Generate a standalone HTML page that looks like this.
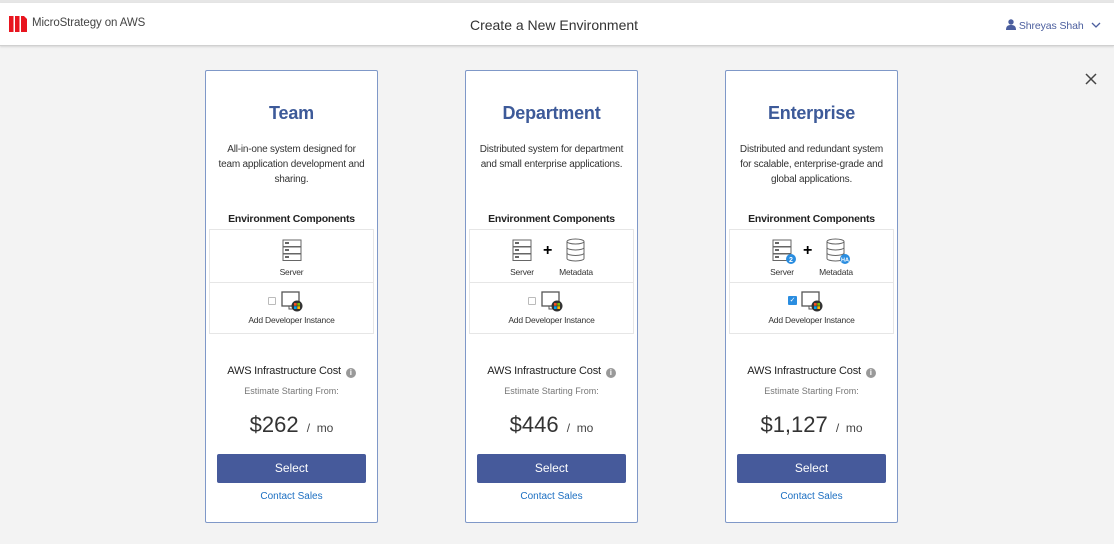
<!DOCTYPE html>
<html><head><meta charset="utf-8"><style>
*{box-sizing:border-box;margin:0;padding:0}
body{width:1114px;height:544px;background:#f3f3f3;font-family:"Liberation Sans",sans-serif;position:relative;overflow:hidden}
.top{position:absolute;left:0;top:0;width:1114px;height:3px;background:#e6e6e6}
.hdr{position:absolute;left:0;top:3px;width:1114px;height:43px;background:#fff;border-bottom:1px solid #d0d0d0;box-shadow:0 1px 2px rgba(0,0,0,.12)}
.logo{position:absolute;left:9px;top:13px}
.brand{position:absolute;left:32px;top:14px;font-size:11.5px;color:#444;letter-spacing:-0.1px}
.title{position:absolute;left:0;width:1108px;text-align:center;top:14px;font-size:14px;color:#333}
.user{position:absolute;left:1006px;top:16px;font-size:10.5px;color:#4b5e9e;letter-spacing:-0.1px}
.close{position:absolute;left:1084px;top:72px}
.card{position:absolute;top:70px;width:173px;height:453px;background:#fff;border:1px solid #7f98c8;border-radius:2px;text-align:center}
.card h2{position:absolute;top:32px;width:100%;font-size:18px;color:#3d5a99;font-weight:bold;letter-spacing:-0.2px}
.desc{position:absolute;top:71px;left:0;right:0;font-size:10px;line-height:15px;color:#333;letter-spacing:-0.2px;white-space:nowrap}
.ec{position:absolute;top:142px;width:100%;font-size:10.5px;font-weight:bold;color:#222;letter-spacing:-0.2px}
.box{position:absolute;top:158px;left:3px;right:3px;height:105px;border:1px solid #e6e6e6}
.box .div{position:absolute;top:52px;left:0;right:0;border-top:1px solid #e6e6e6}
.lbl{position:absolute;font-size:8.5px;color:#333;letter-spacing:-0.2px}
.cost{position:absolute;top:294px;width:100%;font-size:11px;color:#222;letter-spacing:-0.2px}
.info{display:inline-block;width:10px;height:10px;border-radius:50%;background:#999;color:#fff;font-size:8px;line-height:10px;vertical-align:-1px;margin-left:2px;font-weight:bold}
.est{position:absolute;top:315px;width:100%;font-size:9px;color:#777}
.price{position:absolute;top:341px;width:100%;font-size:22px;color:#333}
.price small{font-size:12px;color:#444;margin-left:2px}
.btn{position:absolute;top:383px;left:11px;width:149px;height:29px;background:#465a9b;border-radius:2px;color:#fff;font-size:12px;line-height:29px}
.cs{position:absolute;top:420px;width:100%;font-size:10px;color:#1c6fc2}
</style></head><body>
<div class="top"></div>
<div class="hdr">
<svg class="logo" width="18" height="16" viewBox="0 0 18 16"><rect x="0" y="0" width="4.5" height="16" fill="#e8151f"/><rect x="6" y="0" width="4.5" height="16" fill="#e8151f"/><path d="M12 0h3l3 3v13h-6z" fill="#e8151f"/></svg>
<div class="brand">MicroStrategy on AWS</div>
<div class="title">Create a New Environment</div>
<div class="user"><svg width="10" height="11" viewBox="0 0 10 11" style="vertical-align:-1px"><circle cx="5" cy="3" r="2.7" fill="#4b5e9e"/><path d="M0 11c0-4 2-5 5-5s5 1 5 5z" fill="#4b5e9e"/></svg> Shreyas Shah <svg width="10" height="7" viewBox="0 0 10 7" style="margin-left:5px"><path d="M1 1l4 4 4-4" stroke="#4b5e9e" fill="none" stroke-width="1.3"/></svg></div>
</div>
<svg class="close" width="14" height="14" viewBox="0 0 14 14"><path d="M2 2l10 10M12 2L2 12" stroke="#444" stroke-width="1.5"/></svg>

<div class="card" style="left:205px">
<h2>Team</h2>
<div class="desc">All-in-one system designed for<br>team application development and<br>sharing.</div>
<div class="ec">Environment Components</div>
<div class="box">
<svg style="position:absolute;left:72px;top:9px" width="20" height="23" viewBox="0 0 20 23"><g fill="none" stroke="#666" stroke-width="1"><rect x="1" y="1" width="18" height="6.5"/><rect x="1" y="8" width="18" height="6.5"/><rect x="1" y="15" width="18" height="6.5"/></g><g fill="#666"><rect x="3" y="3" width="4" height="2"/><rect x="3" y="10" width="4" height="2"/><rect x="3" y="17" width="4" height="2"/></g></svg>
<div class="lbl" style="left:0;right:0;top:37px">Server</div>
<div class="div"></div>
<div style="position:absolute;left:58px;top:67px;width:8px;height:8px;border:1px solid #bbb;border-radius:1px"></div>
<svg style="position:absolute;left:71px;top:61px" width="22" height="21" viewBox="0 0 22 21"><rect x="1" y="1" width="17" height="14" fill="none" stroke="#555" stroke-width="1.3"/><path d="M8 15v3h4" stroke="#555" fill="none"/><circle cx="16" cy="15" r="5.5" fill="#333"/><rect x="13" y="12" width="2.7" height="2.7" fill="#f25022"/><rect x="16.3" y="12" width="2.7" height="2.7" fill="#7fba00"/><rect x="13" y="15.3" width="2.7" height="2.7" fill="#00a4ef"/><rect x="16.3" y="15.3" width="2.7" height="2.7" fill="#ffb900"/></svg>
<div class="lbl" style="left:0;right:0;top:85px">Add Developer Instance</div>
</div>
<div class="cost">AWS Infrastructure Cost <span class="info">i</span></div>
<div class="est">Estimate Starting From:</div>
<div class="price">$262 <small>/ &nbsp;mo</small></div>
<div class="btn">Select</div>
<div class="cs">Contact Sales</div>
</div>

<div class="card" style="left:465px">
<h2>Department</h2>
<div class="desc">Distributed system for department<br>and small enterprise applications.</div>
<div class="ec">Environment Components</div>
<div class="box">
<svg style="position:absolute;left:42px;top:9px" width="20" height="23" viewBox="0 0 20 23"><g fill="none" stroke="#666" stroke-width="1"><rect x="1" y="1" width="18" height="6.5"/><rect x="1" y="8" width="18" height="6.5"/><rect x="1" y="15" width="18" height="6.5"/></g><g fill="#666"><rect x="3" y="3" width="4" height="2"/><rect x="3" y="10" width="4" height="2"/><rect x="3" y="17" width="4" height="2"/></g></svg>
<div class="lbl" style="left:30px;width:44px;top:37px">Server</div>
<div style="position:absolute;left:73px;top:12px;font-size:16px;font-weight:bold">+</div>
<svg style="position:absolute;left:96px;top:8px" width="19" height="24" viewBox="0 0 19 24"><g fill="none" stroke="#666" stroke-width="1"><ellipse cx="9.5" cy="3.5" rx="8.5" ry="2.5"/><path d="M1 3.5v17c0 1.4 3.8 2.5 8.5 2.5s8.5-1.1 8.5-2.5v-17M1 9.5c0 1.4 3.8 2.5 8.5 2.5s8.5-1.1 8.5-2.5M1 15c0 1.4 3.8 2.5 8.5 2.5s8.5-1.1 8.5-2.5"/></g></svg>
<div class="lbl" style="left:83px;width:46px;top:37px">Metadata</div>
<div class="div"></div>
<div style="position:absolute;left:58px;top:67px;width:8px;height:8px;border:1px solid #bbb;border-radius:1px"></div>
<svg style="position:absolute;left:71px;top:61px" width="22" height="21" viewBox="0 0 22 21"><rect x="1" y="1" width="17" height="14" fill="none" stroke="#555" stroke-width="1.3"/><path d="M8 15v3h4" stroke="#555" fill="none"/><circle cx="16" cy="15" r="5.5" fill="#333"/><rect x="13" y="12" width="2.7" height="2.7" fill="#f25022"/><rect x="16.3" y="12" width="2.7" height="2.7" fill="#7fba00"/><rect x="13" y="15.3" width="2.7" height="2.7" fill="#00a4ef"/><rect x="16.3" y="15.3" width="2.7" height="2.7" fill="#ffb900"/></svg>
<div class="lbl" style="left:0;right:0;top:85px">Add Developer Instance</div>
</div>
<div class="cost">AWS Infrastructure Cost <span class="info">i</span></div>
<div class="est">Estimate Starting From:</div>
<div class="price">$446 <small>/ &nbsp;mo</small></div>
<div class="btn">Select</div>
<div class="cs">Contact Sales</div>
</div>

<div class="card" style="left:725px">
<h2>Enterprise</h2>
<div class="desc">Distributed and redundant system<br>for scalable, enterprise-grade and<br>global applications.</div>
<div class="ec">Environment Components</div>
<div class="box">
<svg style="position:absolute;left:42px;top:9px" width="26" height="26" viewBox="0 0 26 26"><g fill="none" stroke="#666" stroke-width="1"><rect x="1" y="1" width="18" height="6.5"/><rect x="1" y="8" width="18" height="6.5"/><rect x="1" y="15" width="18" height="6.5"/></g><g fill="#666"><rect x="3" y="3" width="4" height="2"/><rect x="3" y="10" width="4" height="2"/><rect x="3" y="17" width="4" height="2"/></g><circle cx="19" cy="20" r="5" fill="#2a8de0"/><text x="19" y="23" font-size="7" fill="#fff" text-anchor="middle" font-family="Liberation Sans" font-weight="bold">2</text></svg>
<div class="lbl" style="left:30px;width:44px;top:37px">Server</div>
<div style="position:absolute;left:73px;top:12px;font-size:16px;font-weight:bold">+</div>
<svg style="position:absolute;left:96px;top:8px" width="26" height="27" viewBox="0 0 26 27"><g fill="none" stroke="#666" stroke-width="1"><ellipse cx="9.5" cy="3.5" rx="8.5" ry="2.5"/><path d="M1 3.5v17c0 1.4 3.8 2.5 8.5 2.5s8.5-1.1 8.5-2.5v-17M1 9.5c0 1.4 3.8 2.5 8.5 2.5s8.5-1.1 8.5-2.5M1 15c0 1.4 3.8 2.5 8.5 2.5s8.5-1.1 8.5-2.5"/></g><circle cx="19" cy="21" r="5" fill="#2a8de0"/><text x="19" y="23.5" font-size="5.5" fill="#fff" text-anchor="middle" font-family="Liberation Sans" font-weight="bold">HA</text></svg>
<div class="lbl" style="left:83px;width:46px;top:37px">Metadata</div>
<div class="div"></div>
<div style="position:absolute;left:58px;top:66px;width:9px;height:9px;background:#2a8de0;border-radius:1px;color:#fff;font-size:7px;line-height:9px">✓</div>
<svg style="position:absolute;left:71px;top:61px" width="22" height="21" viewBox="0 0 22 21"><rect x="1" y="1" width="17" height="14" fill="none" stroke="#555" stroke-width="1.3"/><path d="M8 15v3h4" stroke="#555" fill="none"/><circle cx="16" cy="15" r="5.5" fill="#333"/><rect x="13" y="12" width="2.7" height="2.7" fill="#f25022"/><rect x="16.3" y="12" width="2.7" height="2.7" fill="#7fba00"/><rect x="13" y="15.3" width="2.7" height="2.7" fill="#00a4ef"/><rect x="16.3" y="15.3" width="2.7" height="2.7" fill="#ffb900"/></svg>
<div class="lbl" style="left:0;right:0;top:85px">Add Developer Instance</div>
</div>
<div class="cost">AWS Infrastructure Cost <span class="info">i</span></div>
<div class="est">Estimate Starting From:</div>
<div class="price">$1,127 <small>/ &nbsp;mo</small></div>
<div class="btn">Select</div>
<div class="cs">Contact Sales</div>
</div>
</body></html>
